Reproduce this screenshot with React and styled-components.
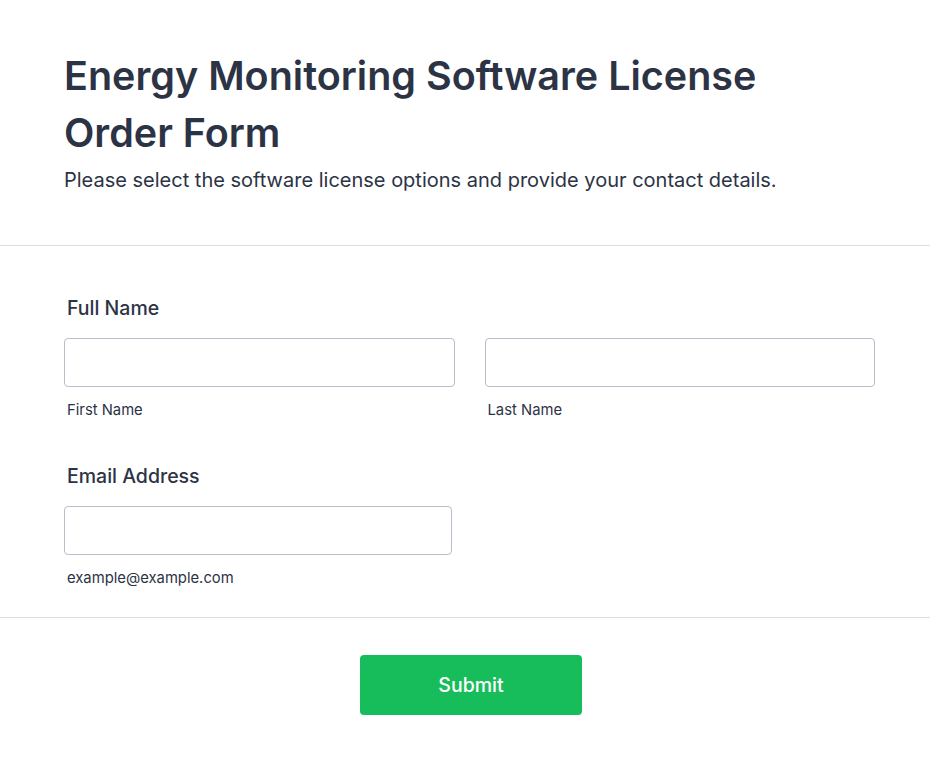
import React from "react";
import styled, { createGlobalStyle } from "styled-components";

const Global = createGlobalStyle`
  html, body { margin: 0; padding: 0; background: #fff; }
  body { font-family: Inter, "Noto Sans", sans-serif; color: #2c3345; }
  * { box-sizing: border-box; }
`;

const Page = styled.div`
  width: 930px;
  min-height: 764px;
  background: #fff;
`;

const Header = styled.header`
  padding: 48px 55px 51px 64px;
  border-bottom: 1px solid #dcdce6;
`;

const Title = styled.h1`
  margin: 0;
  font-size: 39.5px;
  font-weight: 600;
  line-height: 57px;
  color: #2c3345;
  max-width: 760px;
`;

const Subtitle = styled.p`
  margin: 5px 0 0;
  font-size: 20px;
  line-height: 27px;
  color: #2c3345;
`;

const Body = styled.section`
  padding: 49px 55px 28px 64px;
  border-bottom: 1px solid #dcdce6;
  display: flex;
  flex-direction: column;
  gap: 42px;
`;

const Field = styled.div`
  display: flex;
  flex-direction: column;
`;

const Label = styled.label`
  font-size: 19.5px;
  font-weight: 500;
  line-height: 27px;
  padding-left: 3px;
  margin-bottom: 16px;
`;

const Row = styled.div`
  display: grid;
  grid-template-columns: ${(p) => p.$cols};
  column-gap: 30px;
`;

const Cell = styled.div`
  display: flex;
  flex-direction: column;
`;

const Input = styled.input`
  height: 49px;
  width: 100%;
  border: 1px solid #b8bdc9;
  border-radius: 4px;
  background: #fff;
  font: inherit;
  padding: 0 12px;
  outline: none;
`;

const Sub = styled.span`
  margin-top: 13px;
  padding-left: 3px;
  font-size: 14.8px;
  line-height: 21px;
  color: #2c3345;
`;

const Footer = styled.footer`
  display: flex;
  justify-content: center;
  padding: 37px 0 49px 12px;
`;

const Submit = styled.button`
  width: 222px;
  height: 60px;
  border: none;
  border-radius: 4px;
  background: #18bd5b;
  color: #fff;
  font-family: Inter, sans-serif;
  font-size: 19.5px;
  font-weight: 500;
  cursor: pointer;
`;

export default function App() {
  return (
    <Page>
      <Global />
      <Header>
        <Title>Energy Monitoring Software License Order Form</Title>
        <Subtitle>
          Please select the software license options and provide your contact details.
        </Subtitle>
      </Header>
      <Body>
        <Field>
          <Label>Full Name</Label>
          <Row $cols="1fr 1fr">
            <Cell>
              <Input type="text" />
              <Sub>First Name</Sub>
            </Cell>
            <Cell>
              <Input type="text" />
              <Sub>Last Name</Sub>
            </Cell>
          </Row>
        </Field>
        <Field>
          <Label>Email Address</Label>
          <Row $cols="388px">
            <Cell>
              <Input type="email" />
              <Sub>example@example.com</Sub>
            </Cell>
          </Row>
        </Field>
      </Body>
      <Footer>
        <Submit>Submit</Submit>
      </Footer>
    </Page>
  );
}
